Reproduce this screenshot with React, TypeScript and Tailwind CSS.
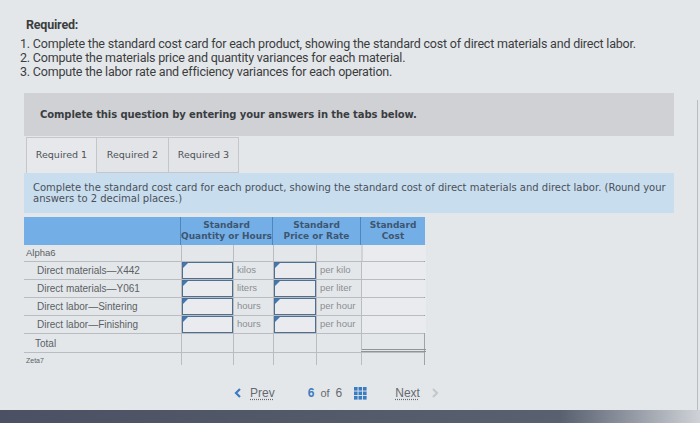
import React from "react";

const rows = [
  { label: "Direct materials—X442", u1: "kilos", u2: "per kilo" },
  { label: "Direct materials—Y061", u1: "liters", u2: "per liter" },
  { label: "Direct labor—Sintering", u1: "hours", u2: "per hour" },
  { label: "Direct labor—Finishing", u1: "hours", u2: "per hour" },
];

function InputCell() {
  return (
    <div className="relative h-full w-full border-[1.5px] border-[#4f6f90] bg-[#e9ebee]">
      <div className="absolute left-0 top-0 h-0 w-0 border-l-[5px] border-b-[5px] border-l-[#3f78b8] border-b-transparent" />
    </div>
  );
}

export default function App() {
  const verdana = { fontFamily: '"DejaVu Sans", Verdana, sans-serif' };
  return (
    <div className="relative h-[423px] w-[700px] overflow-hidden bg-[#e4e7ea] text-[#3b3d40]">
      <div className="absolute right-[2px] top-[100px] h-[320px] w-px bg-[#b9bdc1]" />
      <div className="flex flex-col pl-[24px] pr-[26px]">
        <div className="pt-[18px] pl-[2px] text-[12.5px] leading-[14px] tracking-[-0.2px]" style={{ fontFamily: '"Liberation Sans Narrow", Roboto, sans-serif' }}>
          <div className="mb-[5px] font-bold">Required:</div>
          <div className="-ml-[6px]">1. Complete the standard cost card for each product, showing the standard cost of direct materials and direct labor.</div>
          <div className="-ml-[6px]">2. Compute the materials price and quantity variances for each material.</div>
          <div className="-ml-[6px]">3. Compute the labor rate and efficiency variances for each operation.</div>
        </div>

        <div className="mt-[14px] flex h-[43px] items-center bg-[#cfd1d4] pl-[16px] text-[10px] font-bold tracking-[-0.1px] text-[#3a3d42]" style={verdana}>
          Complete this question by entering your answers in the tabs below.
        </div>

        <div className="mt-[1px] flex pl-[2px] text-[9.5px] text-[#4d5156]" style={verdana}>
          <div className="flex h-[36px] w-[71px] items-center justify-center border border-b-0 border-[#c3c6ca] bg-[#e6e8eb]">Required 1</div>
          <div className="flex h-[36px] w-[72px] items-center justify-center border border-l-0 border-[#c3c6ca] bg-[#e2e4e7]">Required 2</div>
          <div className="flex h-[36px] w-[70px] items-center justify-center border border-l-0 border-[#c3c6ca] bg-[#e2e4e7]">Required 3</div>
        </div>

        <div className="h-[40px] bg-[#c8ddee] pl-[9px] pt-[9px] text-[10px] leading-[11px] text-[#4a5058]" style={verdana}>
          Complete the standard cost card for each product, showing the standard cost of direct materials and direct labor. (Round your answers to 2 decimal places.)
        </div>

        <div className="mt-[4px] h-[148px] overflow-hidden">
          <div className="-ml-[1px] w-[402px] text-[9.5px] text-[#5b5f64]" style={{ fontFamily: '"Liberation Sans", Arial, sans-serif' }}>
            <div className="grid h-[28px] grid-cols-[157px_92px_88px_65px] bg-[#74aee6] text-[9px] font-bold leading-[11px] text-[#3d5670]" style={verdana}>
              <div />
              <div className="flex items-center justify-center border-l border-[#4f86bb] text-center">Standard<br />Quantity or Hours</div>
              <div className="flex items-center justify-center border-l border-[#4f86bb] text-center">Standard<br />Price or Rate</div>
              <div className="flex items-center justify-center border-l border-[#4f86bb] text-center">Standard<br />Cost</div>
            </div>
            <div className="border-l border-r border-[#9ea3a8]">
              <div className="grid h-[17px] grid-cols-[157px_52px_40px_43px_45px_65px] border-b border-[#b9bdc1]">
                <div className="flex items-center pl-[2px]">Alpha6</div>
                <div className="border-l border-[#b9bdc1]" />
                <div className="border-l border-[#b9bdc1]" />
                <div className="border-l border-[#b9bdc1]" />
                <div className="border-l border-[#b9bdc1]" />
                <div className="border-l-2 border-[#d0d3d6] bg-[#e9ebee]" />
              </div>
              {rows.map((r) => (
                <div key={r.label} className="grid h-[18px] grid-cols-[157px_52px_40px_43px_45px_65px] border-b border-[#b9bdc1]">
                  <div className="flex items-center pl-[13px] text-[10px]">{r.label}</div>
                  <div className="border-l border-[#b9bdc1]"><InputCell /></div>
                  <div className="flex items-center border-l border-[#b9bdc1] pl-[3px] text-[#8a8e93]">{r.u1}</div>
                  <div className="border-l border-[#b9bdc1]"><InputCell /></div>
                  <div className="flex items-center border-l border-[#b9bdc1] pl-[3px] text-[#8a8e93]">{r.u2}</div>
                  <div className="border-l border-[#b9bdc1] bg-[#e9ebee]" />
                </div>
              ))}
              <div className="grid h-[19px] grid-cols-[157px_52px_40px_43px_45px_65px] border-b border-[#b9bdc1]">
                <div className="flex items-center pl-[11px] text-[10px]">Total</div>
                <div className="border-l border-[#b9bdc1]" />
                <div className="border-l border-[#b9bdc1]" />
                <div className="border-l border-[#b9bdc1]" />
                <div className="border-l border-[#b9bdc1]" />
                <div className="border-b-[3px] border-double border-l border-[#8e9398] border-l-[#b9bdc1]" />
              </div>
              <div className="grid h-[14px] grid-cols-[157px_52px_40px_43px_45px_65px]">
                <div className="flex items-start pl-[2px] pt-[4px] text-[7px] leading-[8px]">Zeta7</div>
                <div className="border-l border-[#b9bdc1]" />
                <div className="border-l border-[#b9bdc1]" />
                <div className="border-l border-[#b9bdc1]" />
                <div className="border-l border-[#b9bdc1]" />
                <div className="border-l border-[#b9bdc1]" />
              </div>
            </div>
          </div>
        </div>
      </div>

      <div className="mt-[19px] flex items-center pl-[233px] text-[12px]" style={{ fontFamily: '"Liberation Sans", Arial, sans-serif' }}>
        <div className="flex items-center">
          <svg width="10" height="12" viewBox="0 0 10 12" className="mr-[7px]"><path d="M7 2 L3 6 L7 10" fill="none" stroke="#3a7cc2" strokeWidth="2.2" /></svg>
          <span className="text-[#666a70] underline decoration-dotted underline-offset-2">Prev</span>
        </div>
        <div className="ml-[33px] flex items-center">
          <span className="font-bold text-[#3a7cc2]">6</span>
          <span className="ml-[6px] text-[11px] text-[#666a70]">of</span>
          <span className="ml-[6px] text-[#666a70]">6</span>
        </div>
        <svg width="13" height="13" viewBox="0 0 13 13" className="ml-[12px]">
          {[0, 1, 2].map((r) => [0, 1, 2].map((c) => (
            <rect key={`${r}${c}`} x={c * 4.5} y={r * 4.5} width="3.6" height="3.6" fill="#3a7cc2" />
          )))}
        </svg>
        <div className="ml-[28px] flex items-center">
          <span className="text-[#666a70] underline decoration-dotted underline-offset-2">Next</span>
          <svg width="10" height="12" viewBox="0 0 10 12" className="ml-[10px]"><path d="M3 2 L7 6 L3 10" fill="none" stroke="#c4c8cc" strokeWidth="2.2" /></svg>
        </div>
      </div>

      <div className="absolute bottom-0 left-0 h-[13px] w-full bg-gradient-to-r from-[#4b5162] via-[#59606f] via-80% to-[#cfd3d8]" />
    </div>
  );
}
